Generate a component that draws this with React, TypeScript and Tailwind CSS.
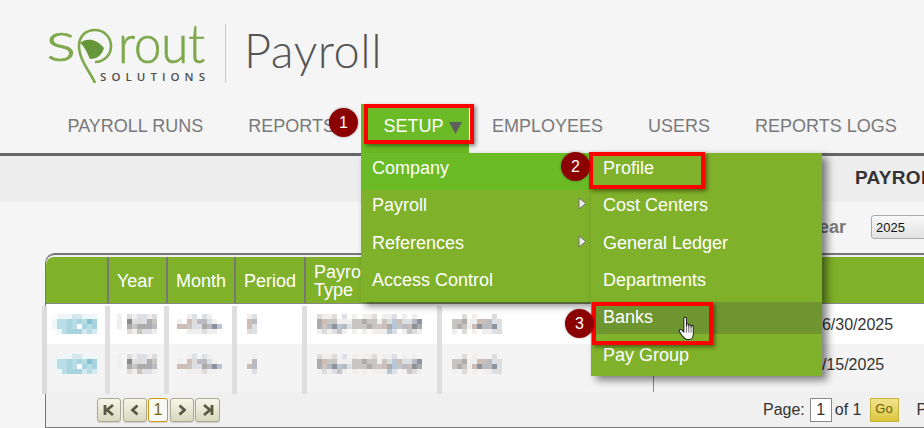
import React from "react";

const palette: Record<string, string> = {
  ".": "transparent", w: "#ffffff", a: "#eef6f8", b: "#b8dde6", c: "#a8d4e0", d: "#d3e9ef", e: "#85c3d3",
  "1": "#f1efed", "2": "#dedcda", "3": "#c8c6c4", "4": "#aeacab", "5": "#8a8a8a", "6": "#dcdfe3", "7": "#b8bcc2", "8": "#8b939d", "9": "#cdbdb5", "0": "#b5c6d6",
};

function Mosaic({ rows }: { rows: string[] }) {
  const w = rows[0].length * 5;
  const h = rows.length * 5;
  return (
    <svg width={w} height={h} shapeRendering="crispEdges" className="block">
      {rows.flatMap((r, y) =>
        r.split("").map((c, x) => <rect key={`${x}-${y}`} x={x * 5} y={y * 5} width={5} height={5} fill={palette[c] ?? "transparent"} />)
      )}
    </svg>
  );
}

const linkM = [".aaaddaaa", "abbcbcbec", "abbcbwcbc", ".abcccdbd"];
const yearM = ["1.216612", "1.562643", "1.434447", "..213661"];
const monthM = ["..16.61..", "1.927761.", "993664780", "..111211."];
const periodM = ["16", "97", "96", "26"];
const periodM2 = [".1", "17", "97", ".6"];
const typeM = [
  "2112.6.1.112.116.1.1.",
  "493311133433132096678",
  "437807633343394037984",
  "121631.1.1.11106.1321",
];
const officeM = ["..2.1...2.", "3341199762", "3431987786", "1.2.1.1162"];

const Sep = () => <div className="absolute left-[-4px] top-[2px] bottom-[-2px] w-[5px] bg-[#dcdcdc]/90" />;

function Row({ bg, h, date, period }: { bg: string; h: string; date: string; period: string[] }) {
  return (
    <div className={`grid grid-cols-[63px_59px_68px_70px_135px_212px_1fr] ${bg} ${h}`}>
      <div className="relative pt-[10px] pl-[6px]"><div className="absolute left-[-4px] top-[2px] bottom-[-2px] w-[5px] bg-[#dcdcdc]" /><Mosaic rows={linkM} /></div>
      <div className="relative pt-[10px] pl-[8px]"><Sep /><Mosaic rows={yearM} /></div>
      <div className="relative pt-[10px] pl-[9px]"><Sep /><Mosaic rows={monthM} /></div>
      <div className="relative pt-[10px] pl-[11px]"><Sep /><Mosaic rows={period} /></div>
      <div className="relative pt-[10px] pl-[11px]"><Sep /><Mosaic rows={typeM} /></div>
      <div className="relative pt-[10px] pl-[11px]"><Sep /><Mosaic rows={officeM} /></div>
      <div className="border-l border-[#888] pl-[159px] pt-[9px] text-[16px] leading-[24px] text-[#333]">{date}</div>
    </div>
  );
}

function Logo() {
  return (
    <svg width="170" height="66" viewBox="0 0 170 66" className="block">
      <text x="0" y="35" fontFamily="Lato" fontWeight={300} fontSize="56" fill="#7ea84d" stroke="#7ea84d" strokeWidth="0.7" textLength="30" lengthAdjust="spacingAndGlyphs">s</text>
      <text x="72" y="37" fontFamily="Lato" fontWeight={300} fontSize="53" fill="#7ea84d" stroke="#7ea84d" strokeWidth="0.7" textLength="87" lengthAdjust="spacingAndGlyphs">rout</text>
      <path d="M49 57 C45 47 33 34 33 20 C33 10 40 4 49 4 C58 4 65 11 65 20 C65 29 58 36 49 36" fill="none" stroke="#7ea84d" strokeWidth="2.6" />
      <path d="M34 17 C40 12 50 12 58 22 C56 30 50 33 44 33 C41 27 39 21 34 17 Z" fill="#66963a" />
      <text x="54" y="55" fontFamily="Open Sans" fontWeight={600} fontSize="11.5" fill="#505050" textLength="105" lengthAdjust="spacing">SOLUTIONS</text>
    </svg>
  );
}

const NavItem = ({ children }: { children: React.ReactNode }) => <div className="px-[22.5px] text-[#78797b] whitespace-nowrap">{children}</div>;

const MenuRow = ({ children, cls = "", arrow = false }: { children: React.ReactNode; cls?: string; arrow?: boolean }) => (
  <div className={`relative text-white ${cls}`}>
    {children}
    {arrow && (
      <svg width="9" height="13" viewBox="0 0 9 13" className="absolute right-[4px] top-[7px]">
        <path d="M1 1 L8 6.5 L1 12 Z" fill="#ececec" stroke="#6e6e6e" strokeWidth="1" />
      </svg>
    )}
  </div>
);

const Badge = ({ n, cls }: { n: number; cls: string }) => (
  <div className={`absolute w-[29px] h-[29px] rounded-full bg-[#8b0000] text-white text-[16px] flex items-center justify-center shadow-[0_0_3px_rgba(0,0,0,0.3)] ${cls}`}>{n}</div>
);

const Pg = ({ children, cls = "w-[24px]" }: { children: React.ReactNode; cls?: string }) => (
  <div className={`h-[24px] ${cls} rounded-[3px] border border-[#aaa98f] bg-gradient-to-b from-[#f6f6ea] to-[#d8d8be] flex items-center justify-center shadow-[0_1px_1px_rgba(0,0,0,0.15)]`}>{children}</div>
);

const Ic = ({ d }: { d: string }) => (
  <svg width="14" height="14" viewBox="0 0 14 14"><path d={d} fill="none" stroke="#5a5a42" strokeWidth="2.8" /></svg>
);

export default function App() {
  return (
    <div className="relative w-[924px] h-[428px] overflow-hidden bg-[#f5f5f5] font-['Liberation_Sans',Arial,sans-serif]">
      {/* header */}
      <div className="h-[156px] border-b-[3px] border-[#666] flex flex-col">
        <div className="h-[104px] flex items-start pl-[46px] pt-[24px]">
          <div className="mt-[2px]"><Logo /></div>
          <div className="w-px h-[59px] bg-[#c8c8c8] ml-[9px]" />
          <div className="ml-[18px] mt-[-4px] font-['Lato',sans-serif] font-light text-[47px] leading-[60px] text-[#555] tracking-[0.5px]">Payroll</div>
        </div>
        <div className="flex items-center h-[49px] pl-[45px] text-[18px] leading-[21px]">
          <div className="pb-[4px]"><NavItem>PAYROLL RUNS</NavItem></div>
          <div className="pb-[4px]"><NavItem>REPORTS</NavItem></div>
          <div className="w-[4px]" />
          <div className="h-[49px] w-[108px] bg-[#6abb25] flex items-center pl-[22px] pb-[4px] text-white">
            SETUP
            <svg width="13" height="12" viewBox="0 0 13 12" className="ml-[6px] mt-[2px]"><path d="M0 0 H13 L6.5 12 Z" fill="#5f5f5f" /></svg>
          </div>
          <div className="pb-[4px]"><NavItem>EMPLOYEES</NavItem></div>
          <div className="pb-[4px]"><NavItem>USERS</NavItem></div>
          <div className="pb-[4px]"><NavItem>REPORTS LOGS</NavItem></div>
        </div>
      </div>

      {/* title band */}
      <div className="h-[46px] bg-[#ededed] pl-[855px] pt-[10px] text-[19px] leading-[24px] font-bold text-[#333] tracking-[0.3px] whitespace-nowrap">PAYROLL RUNS</div>

      {/* filters */}
      <div className="h-[51px] flex items-start pl-[808px] pt-[13px] whitespace-nowrap">
        <div className="w-[38px] text-right text-[#78797b] font-bold text-[18px] leading-[24px]">Year</div>
        <div className="ml-[25px] w-[120px] h-[24px] shrink-0 rounded-[3px] border border-[#aaa] bg-gradient-to-b from-[#f8f8f8] to-[#e2e2e2] pl-[4px] text-[13px] leading-[24px] text-[#111]">2025</div>
      </div>

      {/* panel */}
      <div className="ml-[45px] w-[960px] h-[175px] border-t-[2px] border-l border-b border-[#777] rounded-tl-[10px] bg-[#f0f0f0] pt-[2px] flex flex-col">
        <div className="grid grid-cols-[63px_59px_68px_70px_135px_212px_1fr] h-[47px] bg-[#80b12a] border-b border-[#888] text-white text-[18px] rounded-tl-[8px]">
          <div className="border-r-2 border-[#777]" />
          <div className="border-r-2 border-[#777] pl-[8px] pt-[2px] flex items-center">Year</div>
          <div className="border-r-2 border-[#777] pl-[8px] pt-[2px] flex items-center">Month</div>
          <div className="border-r-2 border-[#777] pl-[8px] pt-[2px] flex items-center">Period</div>
          <div className="pl-[8px] pt-[2px] flex items-center leading-[18px] whitespace-pre-line">{"Payroll\nType"}</div>
          <div />
          <div />
        </div>
        <Row bg="bg-white" h="h-[40px]" date="06/30/2025" period={periodM} />
        <Row bg="bg-[#f4f4f4]" h="h-[48px]" date="6/15/2025" period={periodM2} />
        <div className="flex-1 flex items-start pt-[6px] pl-[51px] text-[16px] text-[#333]">
          <div className="flex items-center">
            <Pg><Ic d="M3 2 V12 M11 2 L5 7 L11 12" /></Pg>
            <div className="w-[2px]" />
            <Pg><Ic d="M9.5 2.5 L4.5 7 L9.5 11.5" /></Pg>
            <div className="w-[1px]" />
            <Pg cls="w-[20px] !bg-none !bg-[#f8f8f4] !border-[#d09a10] text-[#7a6400]">1</Pg>
            <div className="w-[2px]" />
            <Pg><Ic d="M4.5 2.5 L9.5 7 L4.5 11.5" /></Pg>
            <div className="w-[1px]" />
            <Pg cls="w-[25px]"><Ic d="M11 2 V12 M3 2 L9 7 L3 12" /></Pg>
          </div>
          <div className="ml-[543px] flex items-center whitespace-nowrap">
            <span>Page:</span>
            <div className="ml-[5px] w-[22px] h-[24px] border border-[#888] bg-white flex items-center justify-center">1</div>
            <span className="ml-[3px]">of 1</span>
            <div className="ml-[8px] w-[29px] h-[24px] border border-[#c4b43c] bg-gradient-to-b from-[#f0e48a] to-[#dcc63a] text-[13px] text-[#6b5f10] pb-[3px] flex items-center justify-center">Go</div>
            <span className="ml-[18px]">Page</span>
          </div>
        </div>
      </div>

      {/* dropdown */}
      <div className="absolute left-[361px] top-[153px] w-[230px] h-[149px] bg-[#80b12a] text-[18px] leading-[31px] pl-0 shadow-[4px_4px_7px_rgba(0,0,0,0.45)]">
        <MenuRow cls="bg-[#6abb25] h-[37px] pl-[11px]">Company</MenuRow>
        <MenuRow cls="h-[37.5px] pl-[11px]" arrow>Payroll</MenuRow>
        <MenuRow cls="h-[37.5px] pl-[11px]" arrow>References</MenuRow>
        <MenuRow cls="h-[37px] pl-[11px]">Access Control</MenuRow>
      </div>
      <div className="absolute left-[591px] top-[153px] w-[231px] h-[223px] bg-[#80b12a] text-[18px] leading-[30px] shadow-[5px_4px_8px_rgba(0,0,0,0.5)]">
        <MenuRow cls="h-[37px] pl-[12px]">Profile</MenuRow>
        <MenuRow cls="h-[38px] pl-[12px]">Cost Centers</MenuRow>
        <MenuRow cls="h-[37px] pl-[12px]">General Ledger</MenuRow>
        <MenuRow cls="h-[37px] pl-[12px]">Departments</MenuRow>
        <MenuRow cls="h-[32px] pl-[12px] bg-[#6f9530]">Banks</MenuRow>
        <MenuRow cls="h-[42px] pl-[12px] pt-[6px]">Pay Group</MenuRow>
      </div>

      {/* annotations */}
      <div className="absolute left-[364px] top-[104px] w-[110px] h-[40px] border-[4px] border-[#f00] shadow-[2px_2px_4px_rgba(0,0,0,0.45)]" />
      <div className="absolute left-[589px] top-[152px] w-[116px] h-[37px] border-[4px] border-[#f00] shadow-[2px_2px_4px_rgba(0,0,0,0.45)]" />
      <div className="absolute left-[592px] top-[302px] w-[121px] h-[43px] border-[4px] border-[#f00] shadow-[2px_2px_4px_rgba(0,0,0,0.45)]" />
      <Badge n={1} cls="left-[329px] top-[108px]" />
      <Badge n={2} cls="left-[561px] top-[152px]" />
      <Badge n={3} cls="left-[565px] top-[309px]" />

      {/* cursor */}
      <svg width="19" height="25" viewBox="0 0 18 24" className="absolute left-[678px] top-[316px]">
        <path d="M5.5 2.5 C5.5 0.8 8 0.8 8 2.5 V10 V8.5 C8 7.2 10.2 7.2 10.2 8.5 V10.5 V9.3 C10.2 8 12.4 8 12.4 9.3 V11 V10 C12.4 8.9 14.6 8.9 14.6 10 V17 C14.6 20 13 22.5 10.5 22.5 H8.5 C6.5 22.5 5.5 21 4 19 L1.2 15 C0.3 13.6 2.2 12.2 3.4 13.4 L5.5 15.5 Z" fill="#fff" stroke="#222" strokeWidth="1" strokeLinejoin="round" />
        <path d="M8 11 V16 M10.2 11 V16 M12.4 11 V16" stroke="#555" strokeWidth="0.8" />
      </svg>
    </div>
  );
}
